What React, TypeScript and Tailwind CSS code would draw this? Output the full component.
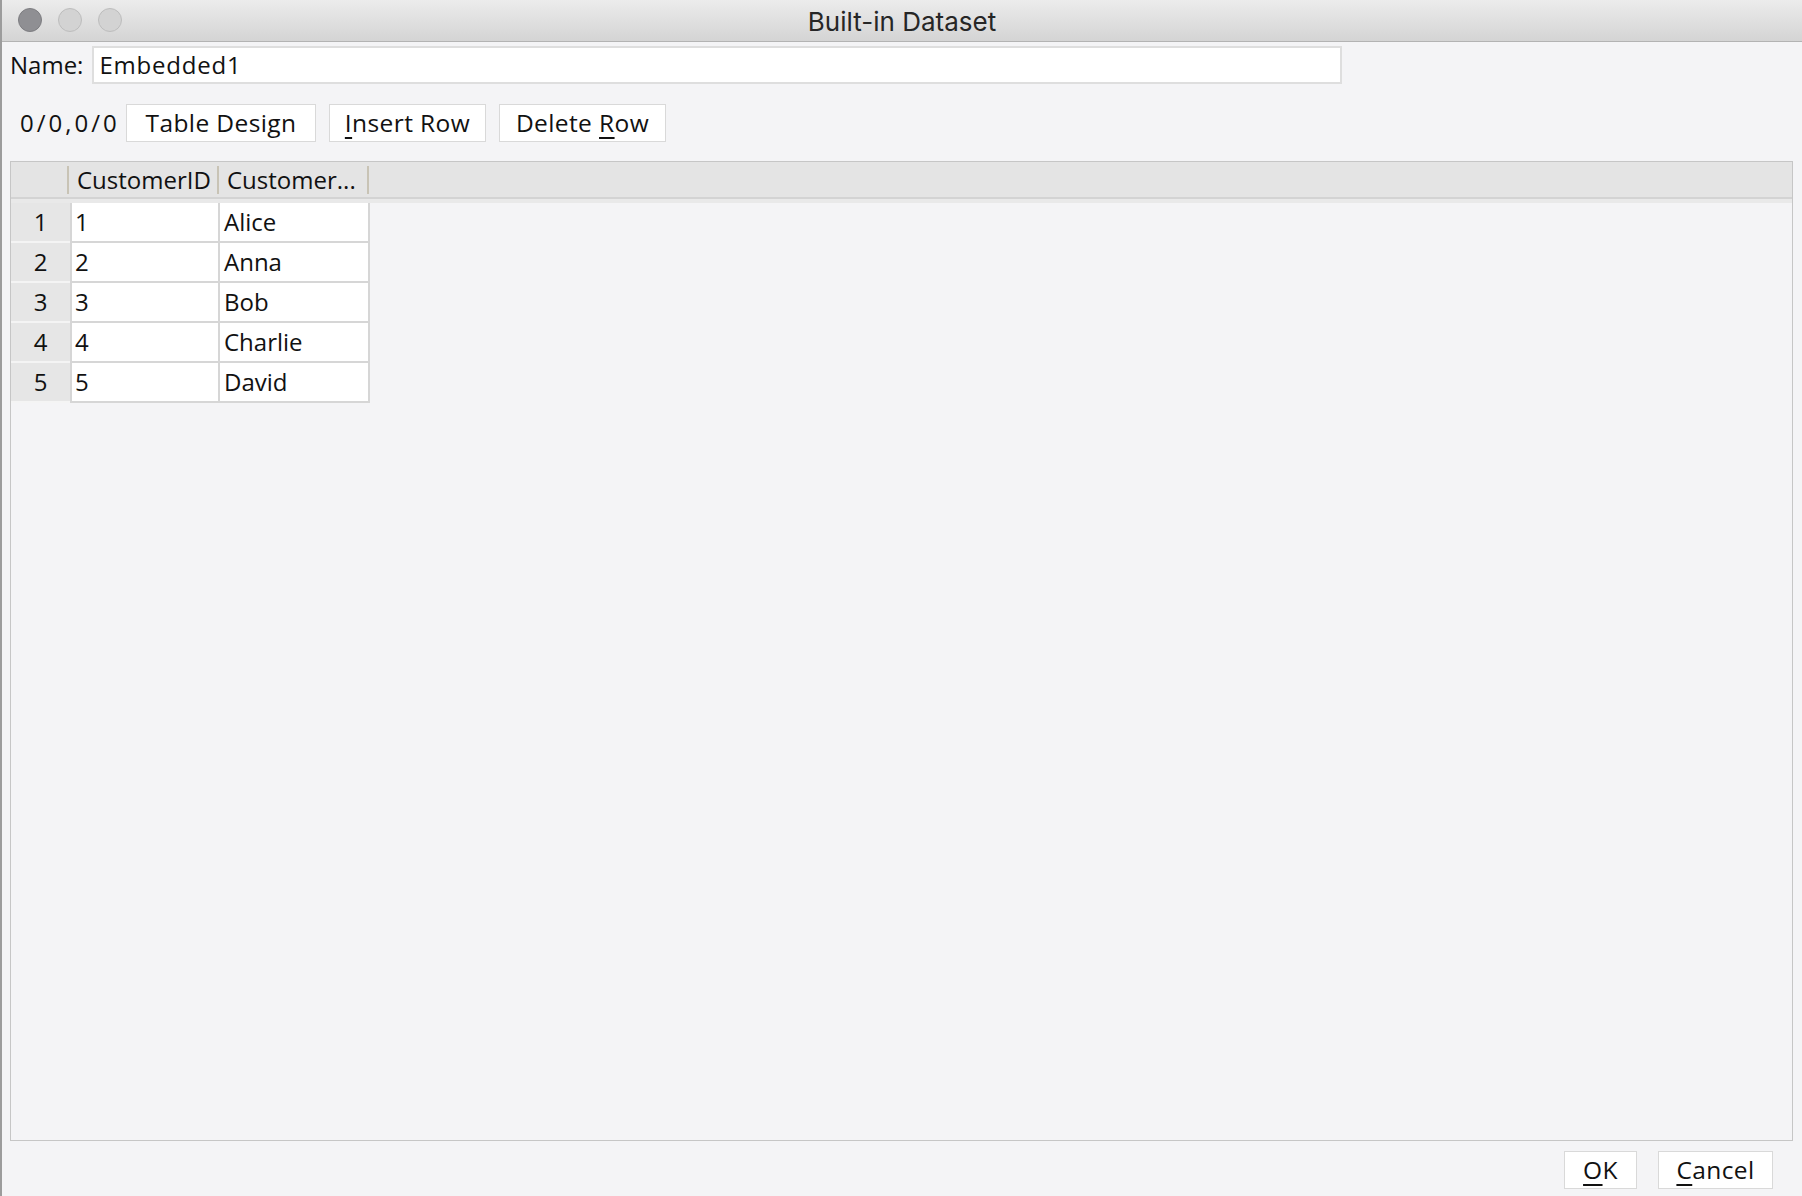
import type { ReactNode } from "react";

const rows = [
  { id: 1, name: "Alice" },
  { id: 2, name: "Anna" },
  { id: 3, name: "Bob" },
  { id: 4, name: "Charlie" },
  { id: 5, name: "David" },
];

const uiFont = "font-['Open_Sans','DejaVu_Sans',sans-serif]";

function Btn({ children, w }: { children: ReactNode; w: string }) {
  return (
    <div
      className={`h-[38px] ${w} bg-white border border-[#d9d9d9] flex items-center justify-center text-[24.5px] tracking-[0.4px] text-[#111] leading-none`}
    >
      {children}
    </div>
  );
}

// mnemonic letter, swing-style underline
function U({ children }: { children: ReactNode }) {
  return <span className="underline decoration-[2px] underline-offset-[5px]">{children}</span>;
}

function HeadSep() {
  return <div className="w-[2px] h-[28px] bg-[#c8c3b5]" />;
}

export default function App() {
  return (
    <div className={`w-[1802px] h-[1196px] bg-[#f4f4f6] flex flex-col border-l-2 border-[#9c9c9c] ${uiFont} text-[#111]`}>
      {/* title bar */}
      <div className="h-[42px] shrink-0 relative bg-gradient-to-b from-[#ececec] to-[#d4d4d4] border-b border-[#b3b3b3] flex items-center justify-center">
        <div className="absolute left-[16px] top-[8px] flex gap-[16px]">
          <div className="w-[24px] h-[24px] rounded-full bg-[#8f8f93] border border-[#7d7d81]" />
          <div className="w-[24px] h-[24px] rounded-full bg-[#d3d3d3] border border-[#bdbdbd]" />
          <div className="w-[24px] h-[24px] rounded-full bg-[#d3d3d3] border border-[#bdbdbd]" />
        </div>
        <span className="font-['Inter',sans-serif] text-[26px] text-[#262626] pt-[1px]">Built-in Dataset</span>
      </div>

      {/* name field */}
      <div className="flex items-center mt-[4px] pl-[8px] gap-[9px]">
        <span className="text-[24px]">Name:</span>
        <div className="w-[1250px] h-[38px] bg-white border-2 border-[#dedede] flex items-center pl-[5px] text-[24px] tracking-[0.8px]">
          Embedded1
        </div>
      </div>

      {/* toolbar */}
      <div className="flex items-center mt-[20px] pl-[18px]">
        <span className="w-[106px] text-[24px] tracking-[3px]">0/0,0/0</span>
        <div className="flex gap-[13px]">
          <Btn w="w-[190px]">Table Design</Btn>
          <Btn w="w-[157px]">
            <span>
              <U>I</U>nsert Row
            </span>
          </Btn>
          <Btn w="w-[167px]">
            <span>
              Delete <U>R</U>ow
            </span>
          </Btn>
        </div>
      </div>

      {/* table */}
      <div className="mt-[19px] ml-[8px] w-[1783px] h-[980px] border border-[#c6c6c6] flex flex-col">
        <div className="shrink-0 border-b-4 border-[#e9e9e9]">
          <div className="h-[37px] bg-[#e4e4e4] flex items-end pb-[1px] border-b-2 border-[#d3d3d3]">
            <div className="w-[58px] h-[32px] flex items-center justify-end">
              <HeadSep />
            </div>
            <div className="w-[150px] h-[32px] flex items-center justify-between pl-[8px]">
              <span className="text-[24px]">CustomerID</span>
              <HeadSep />
            </div>
            <div className="w-[150px] h-[32px] flex items-center justify-between pl-[8px]">
              <span className="text-[24px]">Customer...</span>
              <HeadSep />
            </div>
          </div>
        </div>
        <div className="flex flex-col">
          {rows.map((r) => (
            <div key={r.id} className="flex h-[40px] text-[24px]">
              <div className="w-[59px] bg-[#e6e6e6] border-b-2 border-[#f4f4f4] flex items-center justify-center">
                {r.id}
              </div>
              <div className="w-[150px] bg-white border-b-2 border-r-2 border-l-2 border-[#d6d6d6] flex items-center pl-[3px]">
                {r.id}
              </div>
              <div className="w-[150px] bg-white border-b-2 border-r-2 border-[#d6d6d6] flex items-center pl-[4px]">
                {r.name}
              </div>
            </div>
          ))}
        </div>
      </div>

      {/* dialog buttons */}
      <div className="flex justify-end gap-[21px] mt-[10px] pr-[29px]">
        <Btn w="w-[73px]">
          <U>O</U>K
        </Btn>
        <Btn w="w-[115px]">
          <span>
            <U>C</U>ancel
          </span>
        </Btn>
      </div>
    </div>
  );
}
